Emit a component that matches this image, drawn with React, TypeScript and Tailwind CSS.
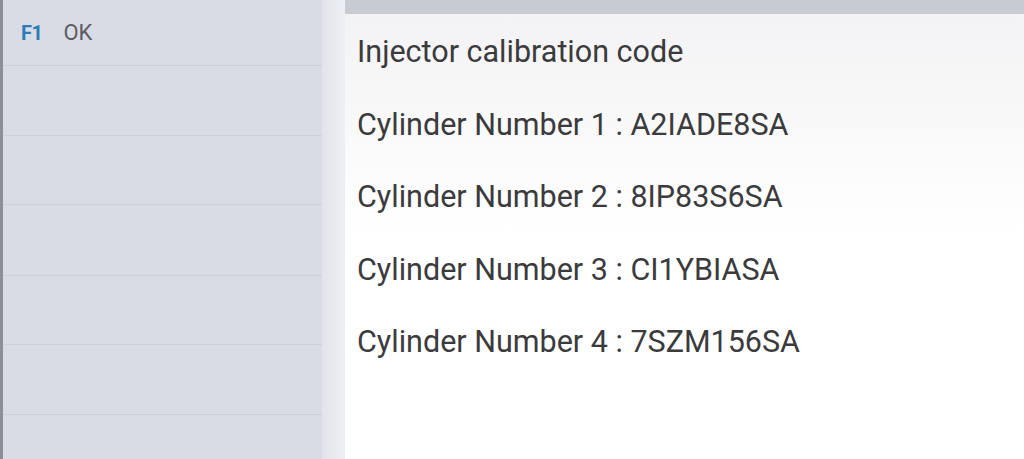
import React from "react";

const rows = [66, 70, 69, 71, 69, 70, 44];
const lines = [
  "Injector calibration code",
  "Cylinder Number 1 : A2IADE8SA",
  "Cylinder Number 2 : 8IP83S6SA",
  "Cylinder Number 3 : CI1YBIASA",
  "Cylinder Number 4 : 7SZM156SA",
];

export default function App() {
  return (
    <div className="flex h-[459px] w-[1024px] overflow-hidden bg-[#e9eaef]" style={{ fontFamily: "Roboto, 'Liberation Sans', sans-serif" }}>
      <div className="w-[3px] bg-[#8d8f97]" />
      <div className="flex w-[319px] flex-col bg-[#d9dce5]">
        {rows.map((h, i) => (
          <div
            key={i}
            className={`flex shrink-0 items-start ${i < rows.length - 1 ? "border-b border-[#cdd0d9]" : ""}`}
            style={{ height: h }}
          >
            {i === 0 && (
              <div className="flex items-center pl-[18px] pt-[19px] leading-[28px]">
                <span className="text-[20px] font-bold tracking-tight text-[#2b7cb9]">F1</span>
                <span className="ml-[21px] text-[22px] text-[#5b5d63]">OK</span>
              </div>
            )}
          </div>
        ))}
      </div>
      <div className="w-[23px] bg-gradient-to-r from-[#e2e4ea] to-[#eeeff3]" />
      <div className="flex flex-1 flex-col">
        <div className="h-[14px] bg-[#c9cbd2]" />
        <div className="flex-1 bg-gradient-to-b from-[#f3f3f5] via-white to-white pl-[12px] pt-[18px]">
          {lines.map((t, i) => (
            <div key={i} className="flex h-[72.5px] items-start text-[30.5px] leading-[40px] text-[#3b3b3d]">
              {t}
            </div>
          ))}
        </div>
      </div>
    </div>
  );
}
